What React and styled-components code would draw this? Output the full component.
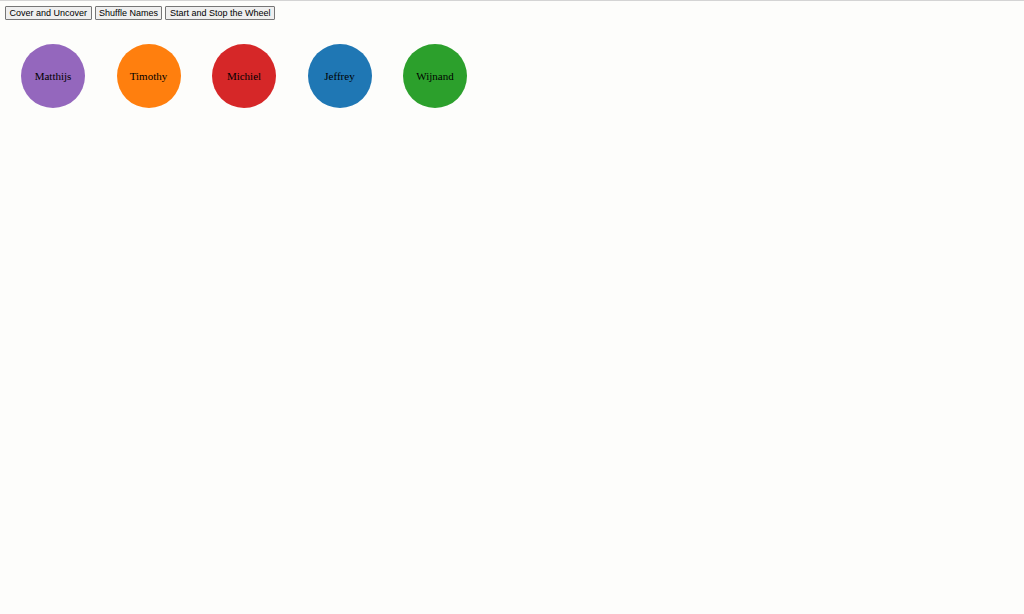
import styled, { createGlobalStyle } from "styled-components";

const GlobalStyle = createGlobalStyle`
  html, body {
    margin: 0;
    padding: 0;
    background-color: #fdfdfb;
  }
  body {
    border-top: 1px solid #d4d4d4;
    min-height: 613px;
  }
`;

const Page = styled.div`
  padding: 5px 5px 0 5px;
`;

const Toolbar = styled.div`
  display: flex;
  gap: 3px;
`;

const Button = styled.button`
  height: 14px;
  padding: 0 3.5px;
  margin: 0;
  border: 1px solid #767676;
  border-radius: 1px;
  background-color: #efefef;
  color: #000;
  font-family: "Liberation Sans", Arial, sans-serif;
  font-size: 9px;
  line-height: 12px;
`;

const Wheel = styled.div`
  display: flex;
  gap: 31.5px;
  padding: 24px 0 0 16px;
`;

const Person = styled.div`
  width: 64px;
  height: 64px;
  border-radius: 50%;
  background-color: ${(p) => p.color};
  display: flex;
  align-items: center;
  justify-content: center;
  color: #000;
  font-family: "Liberation Serif", "Times New Roman", serif;
  font-size: 11px;
`;

const people = [
  { name: "Matthijs", color: "#9467bd" },
  { name: "Timothy", color: "#ff7f0e" },
  { name: "Michiel", color: "#d62728" },
  { name: "Jeffrey", color: "#1f77b4" },
  { name: "Wijnand", color: "#2ca02c" },
];

const App = () => {
  return (
    <>
      <GlobalStyle />
      <Page>
        <Toolbar>
          <Button>Cover and Uncover</Button>
          <Button>Shuffle Names</Button>
          <Button>Start and Stop the Wheel</Button>
        </Toolbar>
        <Wheel>
          {people.map((p) => (
            <Person key={p.name} color={p.color}>
              {p.name}
            </Person>
          ))}
        </Wheel>
      </Page>
    </>
  );
};

export default App;
